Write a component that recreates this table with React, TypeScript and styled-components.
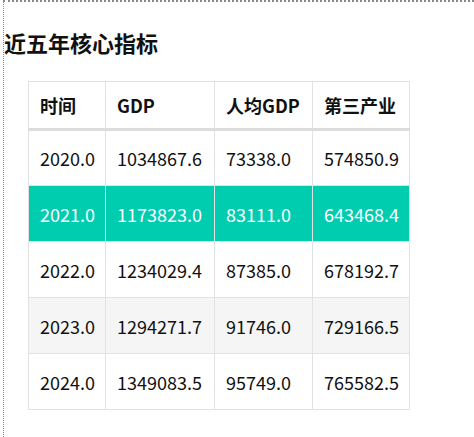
import React from "react";
import styled, {createGlobalStyle} from "styled-components";

interface Row {
    year: string;
    gdp: string;
    perCapita: string;
    tertiary: string;
}

const rows: Row[] = [
    {year: "2020.0", gdp: "1034867.6", perCapita: "73338.0", tertiary: "574850.9"},
    {year: "2021.0", gdp: "1173823.0", perCapita: "83111.0", tertiary: "643468.4"},
    {year: "2022.0", gdp: "1234029.4", perCapita: "87385.0", tertiary: "678192.7"},
    {year: "2023.0", gdp: "1294271.7", perCapita: "91746.0", tertiary: "729166.5"},
    {year: "2024.0", gdp: "1349083.5", perCapita: "95749.0", tertiary: "765582.5"},
];

const highlighted = 1;

const GlobalStyle = createGlobalStyle`
  html, body {
    margin: 0;
    padding: 0;
    background: #fff;
  }
  body {
    font-family: "Noto Sans CJK SC", "Noto Sans", sans-serif;
    color: #111;
  }
`;

const Frame = styled.div`
  margin-left: 3px;
  min-height: 437px;
  border-top: 2px dotted #8a8a8a;
  border-left: 1px dotted #8a8a8a;
  padding-top: 24px;
  box-sizing: border-box;
`;

const Title = styled.h2`
  margin: 0 0 23px 0;
  height: 32px;
  line-height: 32px;
  font-size: 22px;
  font-weight: 700;
  color: #111;
`;

const Table = styled.table`
  width: 381px;
  margin-left: 24px;
  border-collapse: collapse;
  table-layout: fixed;
  font-size: 18px;
`;

const Col = styled.col<{ w: number }>`
  width: ${(p) => p.w}px;
`;

const HeadCell = styled.th`
  height: 48px;
  box-sizing: border-box;
  padding: 0 11px;
  text-align: left;
  font-weight: 700;
  border: 1px solid #e2e2e2;
  border-bottom: 3px solid #dcdcdc;
  color: #111;
`;

const BodyRow = styled.tr<{ active: boolean; striped: boolean }>`
  background: ${(p) => (p.active ? "#00cdb0" : p.striped ? "#f5f5f5" : "#fff")};
  color: ${(p) => (p.active ? "#fff" : "#111")};
`;

const Cell = styled.td`
  height: 56px;
  box-sizing: border-box;
  padding: 0 11px;
  border: 1px solid #e2e2e2;
  white-space: nowrap;
`;

const columns = [
    {label: "时间", w: 77},
    {label: "GDP", w: 109},
    {label: "人均GDP", w: 98},
    {label: "第三产业", w: 97},
];

export default function App() {
    return (
        <>
            <GlobalStyle />
            <Frame>
                <Title>近五年核心指标</Title>
                <Table>
                    <colgroup>
                        {columns.map((c) => (
                            <Col key={c.label} w={c.w} />
                        ))}
                    </colgroup>
                    <thead>
                        <tr>
                            {columns.map((c) => (
                                <HeadCell key={c.label}>{c.label}</HeadCell>
                            ))}
                        </tr>
                    </thead>
                    <tbody>
                        {rows.map((r, i) => (
                            <BodyRow key={r.year} active={i === highlighted} striped={i % 2 === 1}>
                                <Cell>{r.year}</Cell>
                                <Cell>{r.gdp}</Cell>
                                <Cell>{r.perCapita}</Cell>
                                <Cell>{r.tertiary}</Cell>
                            </BodyRow>
                        ))}
                    </tbody>
                </Table>
            </Frame>
        </>
    );
}
